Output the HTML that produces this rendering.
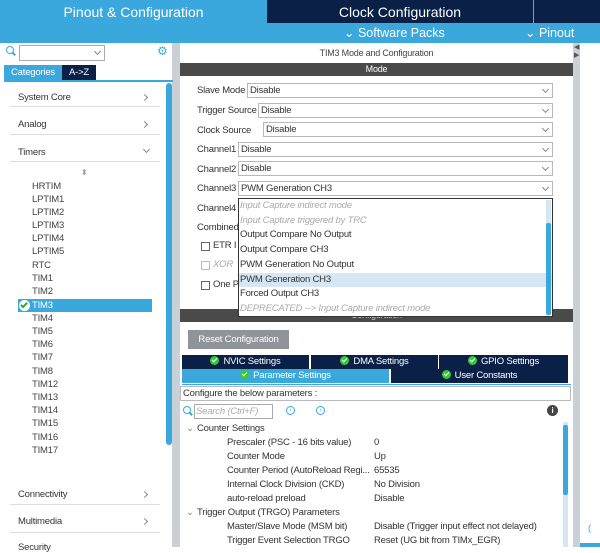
<!DOCTYPE html>
<html><head><meta charset="utf-8"><style>
*{margin:0;padding:0;box-sizing:border-box}
body{width:600px;height:547px;overflow:hidden;background:#fff;font-family:"Liberation Sans",sans-serif;font-size:9.5px;letter-spacing:-0.2px;color:#333;position:relative}
.a{position:absolute;white-space:nowrap}
.box{position:absolute;border:1px solid #b8b8b8;background:#fff;height:15px;font-size:9.5px;line-height:13px;padding-left:2px;color:#333}
.chev{position:absolute;right:4px;top:3px;width:5px;height:5px;border-right:1px solid #888;border-bottom:1px solid #888;transform:rotate(45deg)}
.li{position:absolute;left:32px;font-size:9.5px;color:#444}
.ck{display:inline-block;width:9px;height:9px;border-radius:50%;background:#3c3;vertical-align:-1px;margin-right:4px;position:relative}
.ck:after{content:"";position:absolute;left:3px;top:1px;width:2px;height:4px;border-right:1.5px solid #fff;border-bottom:1.5px solid #fff;transform:rotate(45deg)}
.tab{position:absolute;height:14px;background:#0b2047;color:#fff;font-size:9.5px;line-height:14px;text-align:center;border-right:1px solid #fff}
.row{position:absolute;font-size:9.5px;color:#333;white-space:nowrap}
.mag{position:absolute;width:8px;height:8px;border:1.5px solid #3aa8dc;border-radius:50%}
.mag:after{content:"";position:absolute;left:5px;top:6px;width:4px;height:1.5px;background:#3aa8dc;transform:rotate(45deg)}
.sc{position:absolute;width:5px;height:5px;border-right:1px solid #888;border-top:1px solid #888;transform:rotate(45deg)}
</style></head><body>
<div class="a" style="left:0;top:0;width:267px;height:43px;background:#3aa8dc"></div>
<div class="a" style="left:0;top:4px;width:267px;text-align:center;color:#fff;font-size:14px;letter-spacing:0">Pinout &amp; Configuration</div>
<div class="a" style="left:267px;top:0;width:333px;height:23px;background:#0b2047"></div>
<div class="a" style="left:533px;top:0;width:1px;height:23px;background:#8899bb"></div>
<div class="a" style="left:267px;top:4px;width:266px;text-align:center;color:#fff;font-size:14px;letter-spacing:0">Clock Configuration</div>
<div class="a" style="left:267px;top:23px;width:333px;height:20px;background:#3aa8dc"></div>
<div class="a" style="left:344px;top:25px;color:#fff;font-size:12.5px;letter-spacing:0">⌄ Software Packs</div>
<div class="a" style="left:525px;top:25px;color:#fff;font-size:12.5px;letter-spacing:0">⌄ Pinout</div>
<div class="a" style="left:172px;top:43px;width:8px;height:504px;background:#c9d0d6"></div>
<div class="mag" style="left:6px;top:46px"></div>
<div class="a" style="left:19px;top:45px;width:86px;height:16px;border:1px solid #aaa"><div class="chev" style="top:3px"></div></div>
<div class="a" style="left:157px;top:44px;color:#3aa8dc;font-size:12px">⚙</div>
<div class="a" style="left:4px;top:65px;width:58px;height:15px;background:#3aa8dc;color:#fff;line-height:15px;text-align:center">Categories</div>
<div class="a" style="left:62px;top:65px;width:34px;height:15px;background:#0b2047;color:#fff;line-height:15px;text-align:center">A-&gt;Z</div>
<div class="a" style="left:4px;top:80px;width:169px;height:2px;background:#3aa8dc"></div>
<div class="a" style="left:166px;top:83px;width:6px;height:362px;background:#3aa8dc;border-radius:3px"></div>
<div class="a" style="left:18px;top:92px">System Core</div><div class="sc" style="left:142px;top:95px"></div>
<div class="a" style="left:10px;top:106px;width:150px;height:1px;background:#ddd"></div>
<div class="a" style="left:18px;top:119px">Analog</div><div class="sc" style="left:142px;top:122px"></div>
<div class="a" style="left:10px;top:134px;width:150px;height:1px;background:#ddd"></div>
<div class="a" style="left:18px;top:147px">Timers</div><div class="chev" style="left:144px;top:147px;right:auto"></div>
<div class="a" style="left:10px;top:161px;width:150px;height:1px;background:#ddd"></div>
<div class="a" style="left:81px;top:168px;color:#999;font-size:8px">⬍</div>
<div class="li" style="top:181px">HRTIM</div>
<div class="li" style="top:194px">LPTIM1</div>
<div class="li" style="top:207px">LPTIM2</div>
<div class="li" style="top:220px">LPTIM3</div>
<div class="li" style="top:233px">LPTIM4</div>
<div class="li" style="top:246px">LPTIM5</div>
<div class="li" style="top:260px">RTC</div>
<div class="li" style="top:273px">TIM1</div>
<div class="li" style="top:286px">TIM2</div>
<div class="a" style="left:18px;top:299px;width:134px;height:13px;background:#3aa8dc"></div>
<div class="a" style="left:19px;top:300px;width:11px;height:11px;border-radius:50%;background:#fff"><div style="position:absolute;left:3px;top:1px;width:4px;height:7px;border-right:2px solid #3a3;border-bottom:2px solid #3a3;transform:rotate(45deg)"></div></div>
<div class="li" style="top:300px;color:#fff">TIM3</div>
<div class="li" style="top:313px">TIM4</div>
<div class="li" style="top:326px">TIM5</div>
<div class="li" style="top:339px">TIM6</div>
<div class="li" style="top:352px">TIM7</div>
<div class="li" style="top:366px">TIM8</div>
<div class="li" style="top:379px">TIM12</div>
<div class="li" style="top:392px">TIM13</div>
<div class="li" style="top:405px">TIM14</div>
<div class="li" style="top:418px">TIM15</div>
<div class="li" style="top:432px">TIM16</div>
<div class="li" style="top:445px">TIM17</div>
<div class="a" style="left:18px;top:489px">Connectivity</div><div class="sc" style="left:142px;top:492px"></div>
<div class="a" style="left:10px;top:504px;width:150px;height:1px;background:#ddd"></div>
<div class="a" style="left:18px;top:516px">Multimedia</div><div class="sc" style="left:142px;top:519px"></div>
<div class="a" style="left:10px;top:532px;width:150px;height:1px;background:#ddd"></div>
<div class="a" style="left:18px;top:542px">Security</div>
<div class="a" style="left:573px;top:43px;width:7px;height:504px;background:#c9d0d6"></div>
<div class="a" style="left:574px;top:44px;color:#555;font-size:7px;line-height:8px">◀<br>▶</div>
<div class="a" style="left:180px;top:48px;width:393px;text-align:center;font-size:9px;color:#444">TIM3 Mode and Configuration</div>
<div class="a" style="left:180px;top:63px;width:393px;height:13px;background:#4a4a4a;color:#fff;font-size:9px;text-align:center;line-height:13px">Mode</div>
<div class="a" style="left:197px;top:85px">Slave Mode</div><div class="box" style="left:247px;top:83px;width:306px">Disable<div class="chev"></div></div>
<div class="a" style="left:197px;top:105px">Trigger Source</div><div class="box" style="left:258px;top:103px;width:295px">Disable<div class="chev"></div></div>
<div class="a" style="left:197px;top:125px">Clock Source</div><div class="box" style="left:263px;top:122px;width:290px">Disable<div class="chev"></div></div>
<div class="a" style="left:197px;top:144px">Channel1</div><div class="box" style="left:238px;top:142px;width:315px">Disable<div class="chev"></div></div>
<div class="a" style="left:197px;top:164px">Channel2</div><div class="box" style="left:238px;top:161px;width:315px">Disable<div class="chev"></div></div>
<div class="a" style="left:197px;top:183px">Channel3</div><div class="box" style="left:238px;top:181px;width:315px">PWM Generation CH3<div class="chev"></div></div>
<div class="a" style="left:197px;top:203px">Channel4</div>
<div class="a" style="left:197px;top:222px">Combined</div>
<div class="a" style="left:201px;top:242px;width:9px;height:9px;border:1px solid #666"></div><div class="a" style="left:213px;top:240px">ETR I</div>
<div class="a" style="left:201px;top:261px;width:9px;height:9px;border:1px solid #bbb"></div><div class="a" style="left:213px;top:259px;color:#aaa;font-style:italic">XOR</div>
<div class="a" style="left:201px;top:281px;width:9px;height:9px;border:1px solid #666"></div><div class="a" style="left:213px;top:279px">One P</div>
<div class="a" style="left:180px;top:309px;width:393px;height:13px;background:#4a4a4a;color:#ccc;font-size:9px;text-align:center;line-height:13px">Configuration</div>
<div class="a" style="left:238px;top:198px;width:315px;height:119px;background:#fff;border:1px solid #333;line-height:14.7px">
<div style="padding-left:1px;color:#aaa;font-style:italic">Input Capture indirect mode</div>
<div style="padding-left:1px;color:#aaa;font-style:italic">Input Capture triggered by TRC</div>
<div style="padding-left:1px">Output Compare No Output</div>
<div style="padding-left:1px">Output Compare CH3</div>
<div style="padding-left:1px">PWM Generation No Output</div>
<div style="padding-left:1px;background:#d6e6f5">PWM Generation CH3</div>
<div style="padding-left:1px">Forced Output CH3</div>
<div style="padding-left:1px;color:#aaa;font-style:italic">DEPRECATED --&gt; Input Capture indirect mode</div>
<div style="position:absolute;right:1px;top:1px;width:5px;height:115px;background:#d6e6f5"></div>
<div style="position:absolute;right:1px;top:24px;width:5px;height:92px;background:#3aa8dc;border-radius:2px"></div>
</div>
<div class="a" style="left:188px;top:330px;width:101px;height:19px;background:#8e9499;color:#fff;font-size:9.5px;text-align:center;line-height:19px">Reset Configuration</div>
<div class="tab" style="left:182px;top:355px;width:128px"><span class="ck"></span>NVIC Settings</div>
<div class="tab" style="left:311px;top:355px;width:128px"><span class="ck"></span>DMA Settings</div>
<div class="tab" style="left:439px;top:355px;width:130px"><span class="ck"></span>GPIO Settings</div>
<div class="tab" style="left:182px;top:369px;width:208px;background:#3aa8dc"><span class="ck"></span>Parameter Settings</div>
<div class="tab" style="left:391px;top:369px;width:178px"><span class="ck"></span>User Constants</div>
<div class="a" style="left:182px;top:384px;width:389px;height:1px;background:#3aa8dc"></div>
<div class="a" style="left:180px;top:386px;width:391px;height:15px;border:1px solid #bbb;line-height:13px;padding-left:2px">Configure the below parameters :</div>
<div class="mag" style="left:183px;top:406px"></div>
<div class="a" style="left:194px;top:404px;width:79px;height:15px;border:1px solid #aaa;color:#aaa;font-style:italic;line-height:13px;padding-left:1px">Search (Ctrl+F)</div>
<div class="a" style="left:286px;top:406px;width:9px;height:9px;border:1px solid #3aa8dc;border-radius:50%;color:#3aa8dc;font-size:7px;line-height:7px;text-align:center">‹</div>
<div class="a" style="left:316px;top:406px;width:9px;height:9px;border:1px solid #3aa8dc;border-radius:50%;color:#3aa8dc;font-size:7px;line-height:7px;text-align:center">›</div>
<div class="a" style="left:547px;top:405px;width:11px;height:11px;border-radius:50%;background:#444;color:#fff;font-size:8px;line-height:11px;text-align:center;font-weight:bold">i</div>
<div class="a" style="left:563px;top:422px;width:5px;height:125px;background:#d6e6f5"></div>
<div class="a" style="left:563px;top:425px;width:5px;height:70px;background:#3aa8dc;border-radius:2px"></div>
<div class="row" style="left:186px;top:423px;color:#888">⌄</div><div class="row" style="left:197px;top:423px">Counter Settings</div>
<div class="row" style="left:227px;top:437px">Prescaler (PSC - 16 bits value)</div><div class="row" style="left:374px;top:437px">0</div>
<div class="row" style="left:227px;top:451px">Counter Mode</div><div class="row" style="left:374px;top:451px">Up</div>
<div class="row" style="left:227px;top:465px">Counter Period (AutoReload Regi...</div><div class="row" style="left:374px;top:465px">65535</div>
<div class="row" style="left:227px;top:479px">Internal Clock Division (CKD)</div><div class="row" style="left:374px;top:479px">No Division</div>
<div class="row" style="left:227px;top:493px">auto-reload preload</div><div class="row" style="left:374px;top:493px">Disable</div>
<div class="row" style="left:186px;top:507px;color:#888">⌄</div><div class="row" style="left:197px;top:507px">Trigger Output (TRGO) Parameters</div>
<div class="row" style="left:227px;top:521px">Master/Slave Mode (MSM bit)</div><div class="row" style="left:374px;top:521px">Disable (Trigger input effect not delayed)</div>
<div class="row" style="left:227px;top:535px">Trigger Event Selection TRGO</div><div class="row" style="left:374px;top:535px">Reset (UG bit from TIMx_EGR)</div>
<div class="a" style="left:588px;top:523px;color:#3aa8dc">(</div>
<div class="a" style="left:580px;top:543px;width:20px;height:4px;background:#3aa8dc"></div>
</body></html>
